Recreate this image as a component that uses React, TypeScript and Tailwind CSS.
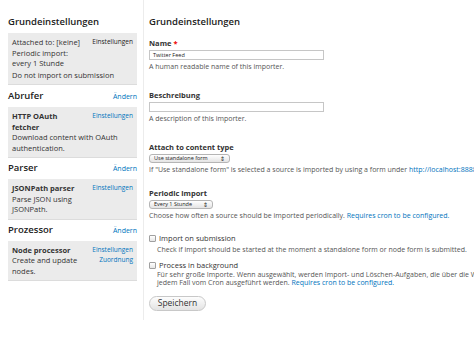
import { ReactNode } from "react";

const font = { fontFamily: '"Open Sans", "DejaVu Sans", sans-serif' };

const SideHeading = ({ title, link }: { title: string; link?: boolean }) => (
  <div className="flex items-center justify-between h-[21px]">
    <h2 className="text-[9.5px] text-[#222] font-semibold">{title}</h2>
    {link && <a className="text-[7px] text-[#0074bd] pt-[2px]">Ändern</a>}
  </div>
);

const Box = ({ children }: { children: ReactNode }) => (
  <div className="bg-[#ebebeb] border-b border-[#dcdcdc] px-[4px] py-[4px] text-[7.5px] leading-[10.5px] text-[#333]">
    {children}
  </div>
);

const Label = ({ children }: { children: ReactNode }) => (
  <div className="text-[7.5px] font-bold text-[#333] leading-[10px]">{children}</div>
);

const Help = ({ children }: { children: ReactNode }) => (
  <div className="text-[7px] text-[#555] leading-[9px] whitespace-nowrap">{children}</div>
);

const Select = ({ value, width }: { value: string; width: string }) => (
  <div
    className={`${width} h-[9px] rounded-[3px] border border-[#b5b5b5] bg-gradient-to-b from-white to-[#e4e4e4] flex items-center justify-between px-[4px] text-[5.5px] text-[#222]`}
  >
    <span>{value}</span>
    <span className="text-[6px] leading-none">⇕</span>
  </div>
);

const Check = ({ label }: { label: string }) => (
  <div className="flex items-center gap-[3px] text-[7.5px] text-[#333] leading-[10px]">
    <span className="w-[7px] h-[7px] border border-[#a0a0a0] rounded-[1px] bg-gradient-to-b from-white to-[#e6e6e6]" />
    {label}
  </div>
);

export default function App() {
  return (
    <div className="w-[474px] h-[354px] overflow-hidden bg-white flex" style={font}>
      <aside className="w-[144px] shrink-0 border-r border-[#ececec] pl-[8px] pr-[6px] pt-[11px] h-[320px]">
        <div className="h-[22px] flex items-center">
          <h2 className="text-[9.5px] text-[#222] font-semibold">Grundeinstellungen</h2>
        </div>
        <Box>
          <div className="flex justify-between">
            <span>Attached to: [keine]</span>
            <a className="text-[6.5px] text-[#222]">Einstellungen</a>
          </div>
          <div>Periodic import:</div>
          <div>every 1 Stunde</div>
          <div className="mt-[1px]">Do not import on submission</div>
        </Box>
        <div className="mt-[1px]">
          <SideHeading title="Abrufer" link />
        </div>
        <Box>
          <div className="flex justify-between">
            <span className="font-bold">HTTP OAuth</span>
            <a className="text-[6.5px] text-[#0074bd]">Einstellungen</a>
          </div>
          <div className="font-bold">fetcher</div>
          <div>Download content with OAuth</div>
          <div>authentication.</div>
        </Box>
        <SideHeading title="Parser" link />
        <Box>
          <div className="flex justify-between">
            <span className="font-bold">JSONPath parser</span>
            <a className="text-[6.5px] text-[#0074bd]">Einstellungen</a>
          </div>
          <div>Parse JSON using</div>
          <div>JSONPath.</div>
        </Box>
        <SideHeading title="Prozessor" link />
        <Box>
          <div className="flex justify-between">
            <span className="font-bold">Node processor</span>
            <a className="text-[6.5px] text-[#0074bd]">Einstellungen</a>
          </div>
          <div className="flex justify-between">
            <span>Create and update</span>
            <a className="text-[6.5px] text-[#0074bd]">Zuordnung</a>
          </div>
          <div>nodes.</div>
        </Box>
      </aside>

      <main className="flex-1 pl-[5px] pt-[11px] min-w-0">
        <h2 className="text-[9.5px] text-[#222] font-semibold h-[22px] flex items-center">
          Grundeinstellungen
        </h2>

        <div className="mt-[5px]">
          <Label>
            Name <span className="text-[#e00]">*</span>
          </Label>
          <div className="w-[175px] h-[10px] border border-[#c6c6c6] mt-[2px] text-[5.5px] leading-[8px] px-[3px] text-[#222]">
            Twitter Feed
          </div>
          <div className="mt-[2px]">
            <Help>A human readable name of this importer.</Help>
          </div>
        </div>

        <div className="mt-[19px]">
          <Label>Beschreibung</Label>
          <div className="w-[175px] h-[10px] border border-[#c6c6c6] mt-[2px]" />
          <div className="mt-[2px]">
            <Help>A description of this importer.</Help>
          </div>
        </div>

        <div className="mt-[19px]">
          <Label>Attach to content type</Label>
          <div className="mt-[2px]">
            <Select value="Use standalone form" width="w-[81px]" />
          </div>
          <div className="mt-[2px]">
            <Help>
              If "Use standalone form" is selected a source is imported by using a form under{" "}
              <a className="text-[#0074bd]">http://localhost:8888/import/twitter_feed</a>
            </Help>
          </div>
        </div>

        <div className="mt-[14px]">
          <Label>Periodic import</Label>
          <div className="mt-[2px]">
            <Select value="Every 1 Stunde" width="w-[64px]" />
          </div>
          <div className="mt-[2px]">
            <Help>
              Choose how often a source should be imported periodically.{" "}
              <a className="text-[#0074bd]">Requires cron to be configured.</a>
            </Help>
          </div>
        </div>

        <div className="mt-[13px]">
          <Check label="Import on submission" />
          <div className="pl-[8px] mt-[2px]">
            <Help>Check if import should be started at the moment a standalone form or node form is submitted.</Help>
          </div>
        </div>

        <div className="mt-[6px]">
          <Check label="Process in background" />
          <div className="pl-[8px] mt-[1px]">
            <div className="text-[7px] text-[#555] leading-[8px] whitespace-nowrap">
              Für sehr große Importe. Wenn ausgewählt, werden Import- und Löschen-Aufgaben, die über die Web-Oberfläche gestartet werden, in
              <br />
              jedem Fall vom Cron ausgeführt werden. <a className="text-[#0074bd]">Requires cron to be configured.</a>
            </div>
          </div>
        </div>

        <button className="mt-[9px] h-[15px] w-[57px] rounded-full border border-[#c8c8c8] bg-gradient-to-b from-[#fdfdfd] to-[#e3e3e3] text-[8.5px] text-[#333]">
          Speichern
        </button>
      </main>
    </div>
  );
}
